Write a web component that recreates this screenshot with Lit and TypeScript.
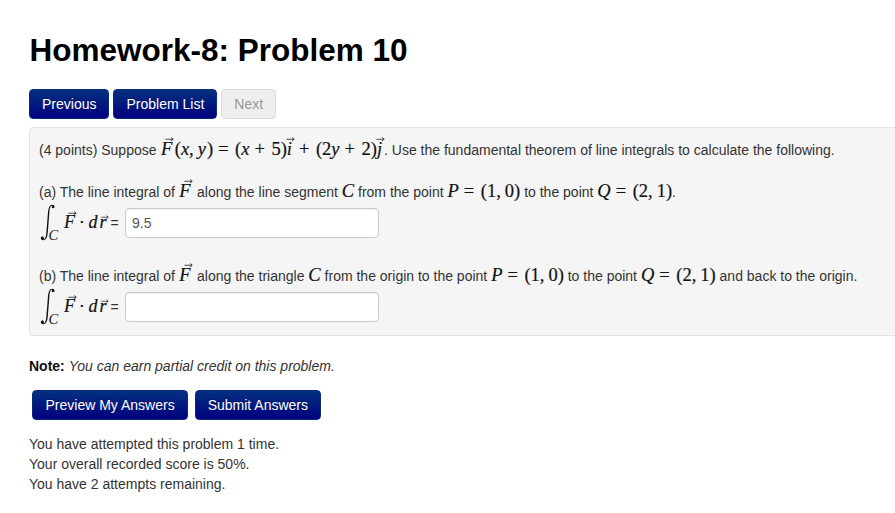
import { LitElement, html, css } from "lit";
import { customElement } from "lit/decorators.js";

const arrow = html`<svg class="arrow" viewBox="0 0 12 6"><path d="M0.5 3H10.5M8 .7L11 3L8 5.3" fill="none" stroke="#111" stroke-width="1"/></svg>`;
const vec = (c: string, cls = "") => html`<span class="vec ${cls}"><i>${c}</i>${arrow}</span>`;
const m = (s: string) => html`<span class="m">${s}</span>`;
const op = (s: string) => html`<span class="m op">${s}</span>`;
const iv = (s: string, cls = "") => html`<i class="m ${cls}">${s}</i>`;
const comma = html`<span class="m comma">,</span>`;
const pair = (a: string, b: string) => html`${m("(" + a)}${comma}${m(b + ")")}`;

@customElement("app-root")
export class AppRoot extends LitElement {
  static styles = css`
    :host { display: block; width: 895px; height: 513px; overflow: hidden; background: #fff; color: #333;
      font-family: "Liberation Sans", Arial, sans-serif; font-size: 14px; line-height: 20px; }
    .page { padding: 0 0 0 29px; display: flex; flex-direction: column; align-items: flex-start; width: 900px; box-sizing: border-box; }
    h1 { margin: 28px 0 0 0.5px; font-size: 31.5px; line-height: 44px; font-weight: bold; color: #000; }
    .nav { display: flex; gap: 4px; margin-top: 17px; }
    .actions { display: flex; gap: 7px; margin: 14px 0 0 3px; }
    .btn { box-sizing: border-box; height: 30px; display: flex; align-items: center; padding: 0 12px; border-radius: 4px; color: #fff; font-size: 14px;
      background: linear-gradient(#04317f, #00007f); border: 1px solid #0a2a7c; text-shadow: 0 -1px 0 rgba(0,0,0,.25); }
    .btn.off { background: #eee; border-color: #ddd; color: #999; text-shadow: none; }
    .btn.wide { padding: 0 12.5px; }
    .btn.tight { padding: 0 11.5px; }
    .problem { box-sizing: border-box; width: 880px; margin-top: 8px; height: 209px; padding: 9px 9px 0 9px;
      background: #f5f5f5; border: 1px solid #e3e3e3; border-radius: 4px; }
    .line { height: 26px; line-height: 26px; white-space: pre; color: #333; }
    .q2 { margin-top: 16px; }
    .q3 { margin-top: 19px; }
    .m, .vec { font-family: "Liberation Serif", serif; font-size: 18.5px; line-height: 20px; color: #111; -webkit-text-stroke: 0.2px #111; }
    .op { margin: 0 6.5px 0 5px; }
    .comma { margin-right: 4px; }
    .wy { margin-right: 1px; }
    .vec { position: relative; display: inline-block; margin: 0 2.5px 0 .5px; }
    .arrow { position: absolute; left: 4.5px; top: -2px; width: 9px; height: 4.5px; }
    .vec.thin { margin: 0 2px 0 0; }
    .vec.thin .arrow { left: -1px; }
    .vec.sm, .m.sm { font-size: 18px; -webkit-text-stroke: 0.2px #111; }
    .vec.sm { margin: 0; }
    .vec.sm .arrow { left: 4px; top: -1px; }
    .vec.r { margin-left: 2px; }
    .vec.r .arrow { left: 1px; top: 3px; width: 8px; }
    .dot { margin: 0 3.5px 0 4px; }
    .ans { box-sizing: border-box; display: flex; align-items: flex-start; height: 39px; padding-top: 3px; }
    .int { position: relative; width: 25px; height: 36px; }
    .int svg { position: absolute; left: 0; top: -4px; width: 16px; height: 37px; }
    .int .sub { position: absolute; left: 9.5px; top: 19px; font: italic 14.5px/16px "Liberation Serif", serif; color: #111; }
    .expr { width: 61px; height: 30px; line-height: 30px; white-space: pre; }
    .input { box-sizing: border-box; width: 254px; height: 30px; border: 1px solid #ccc; border-radius: 4px; background: #fff; padding: 0 6px; display: flex; align-items: center; color: #555; box-shadow: inset 0 1px 1px rgba(0,0,0,.075); }
    .note { margin: 20px 0 0 0; }
    .note b { color: #111; }
    .status { margin: 14px 0 0 0; line-height: 20px; }
  `;

  private integral() {
    return html`<div class="int"><svg viewBox="0 0 16 37"><path fill="#111" d="M15.5 2.6C15.5 1.5 14.5.8 13.4.8C10.5.8 9.5 4 9 8L7.4 28C7.1 32 6.5 35.2 4.4 35.2C4.6 35.1 4.9 34.6 4.9 34C4.9 33.2 4.2 32.6 3.4 32.6C2.5 32.6 1.8 33.3 1.8 34.2C1.8 35.4 2.9 36.2 4.2 36.2C7.4 36.2 8.4 32.6 8.8 28.5L10.4 8C10.7 4.5 11.2 1.8 13.3 1.8C13 2 12.8 2.4 12.8 2.9C12.8 3.7 13.4 4.3 14.2 4.3C15 4.3 15.5 3.6 15.5 2.6Z"/></svg><span class="sub">C</span></div>
      <div class="expr">${vec("F", "sm")}<span class="m sm dot">⋅</span><i class="m sm">d</i>${vec("r", "sm r")} = </div>`;
  }

  render() {
    return html`<div class="page">
      <h1>Homework-8: Problem 10</h1>
      <div class="nav"><div class="btn">Previous</div><div class="btn">Problem List</div><div class="btn off">Next</div></div>
      <div class="problem">
        <div class="line">(4 points) Suppose ${vec("F")}${m("(")}${iv("x")}${comma}${iv("y", "wy")}${m(")")}${op("=")}${m("(")}${iv("x")}${op("+")}${m("5)")}${vec("i", "thin")}${op("+")}${m("(2")}${iv("y")}${op("+")}${m("2)")}${vec("j", "thin")}. Use the fundamental theorem of line integrals to calculate the following.</div>
        <div class="line q2">(a) The line integral of ${vec("F")} along the line segment ${iv("C")} from the point ${iv("P")}${op("=")}${pair("1", "0")} to the point ${iv("Q")}${op("=")}${pair("2", "1")}.</div>
        <div class="ans">${this.integral()}<div class="input">9.5</div></div>
        <div class="line q3">(b) The line integral of ${vec("F")} along the triangle ${iv("C")} from the origin to the point ${iv("P")}${op("=")}${pair("1", "0")} to the point ${iv("Q")}${op("=")}${pair("2", "1")} and back to the origin.</div>
        <div class="ans">${this.integral()}<div class="input"></div></div>
      </div>
      <div class="note"><b>Note:</b> <i>You can earn partial credit on this problem.</i></div>
      <div class="actions"><div class="btn wide">Preview My Answers</div><div class="btn tight">Submit Answers</div></div>
      <div class="status">You have attempted this problem 1 time.<br>Your overall recorded score is 50%.<br>You have 2 attempts remaining.</div>
    </div>`;
  }
}
